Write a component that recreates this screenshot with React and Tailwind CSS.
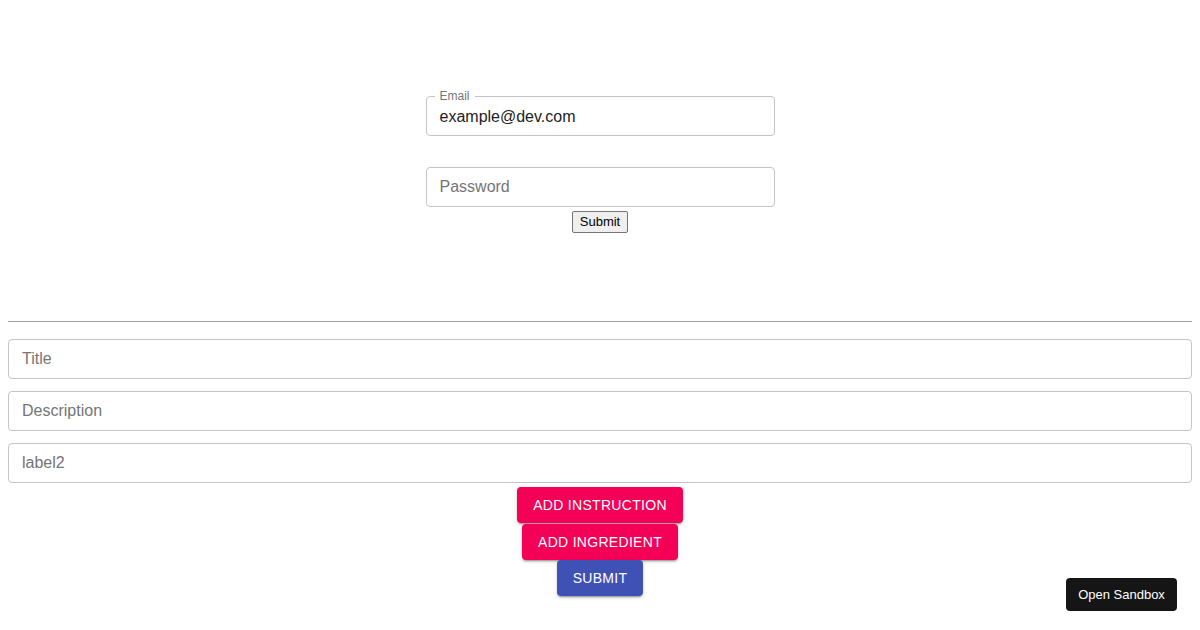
const font = { fontFamily: '"Liberation Sans", Arial, sans-serif' };

function Field({ label, value, shrink, className }) {
  return (
    <div
      className={
        "relative h-[40px] rounded-[4px] border border-[#c4c4c4] bg-white " +
        (className || "")
      }
    >
      {shrink && (
        <span className="absolute left-[8px] top-[-8px] bg-white px-[5px] text-[12px] leading-[14px] text-[#757575]">
          {label}
        </span>
      )}
      <div
        className={
          "flex h-full items-center px-[13px] text-[16px] " +
          (value ? "pt-[1px] text-[#222]" : "text-[#757575]")
        }
      >
        {value || label}
      </div>
    </div>
  );
}

function MuiButton({ children, color }) {
  return (
    <button
      className={
        "h-[36px] rounded-[4px] px-[16px] text-[14px] uppercase tracking-[0.3px] text-white shadow-[0_3px_1px_-2px_rgba(0,0,0,0.2),0_2px_2px_0_rgba(0,0,0,0.14),0_1px_5px_0_rgba(0,0,0,0.12)] " +
        color
      }
    >
      {children}
    </button>
  );
}

export default function App() {
  return (
    <div className="relative h-[630px] w-[1200px] bg-white px-[8px]" style={font}>
      {/* login form */}
      <div className="flex flex-col items-center pt-[96px]">
        <div className="w-[349px]">
          <Field label="Email" value="example@dev.com" shrink />
        </div>
        <div className="mt-[31px] w-[349px]">
          <Field label="Password" />
        </div>
        <button className="mt-[4px] h-[22px] rounded-[2px] border border-[#767676] bg-[#efefef] px-[7px] text-[13px] text-black">
          Submit
        </button>
      </div>

      <hr className="mt-[88px] border-t border-[#a0a0a0]" />

      {/* recipe form */}
      <div className="mt-[17px] flex flex-col gap-[12px]">
        <Field label="Title" />
        <Field label="Description" />
        <Field label="label2" />
      </div>
      <div className="mt-[4px] flex flex-col items-center">
        <MuiButton color="bg-[#f50057]">Add Instruction</MuiButton>
        <div className="mt-[1px]">
          <MuiButton color="bg-[#f50057]">Add Ingredient</MuiButton>
        </div>
        <MuiButton color="bg-[#3f51b5]">Submit</MuiButton>
      </div>

      <button className="absolute bottom-[19px] right-[23px] h-[33px] w-[111px] rounded-[4px] bg-[#151515] text-[13px] text-white">
        Open Sandbox
      </button>
    </div>
  );
}
